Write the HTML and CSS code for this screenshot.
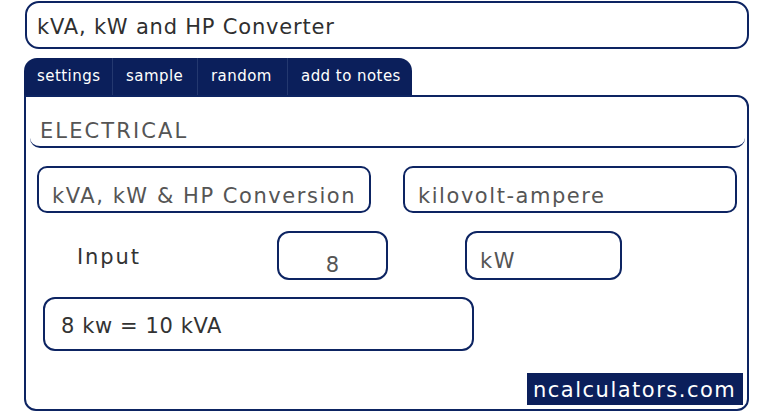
FILE: index.html
```html
<!DOCTYPE html>
<html>
<head>
<meta charset="utf-8">
<link rel="stylesheet" href="styles.css">
</head>
<body>
<div class="title">kVA, kW and HP Converter</div>
<div class="tabs">
  <div class="tab t1">settings</div>
  <div class="tab t2">sample</div>
  <div class="tab t3">random</div>
  <div class="tab t4">add to notes</div>
</div>
<div class="panel">
  <div class="header">ELECTRICAL</div>
  <div class="row row1">
    <div class="box sel">kVA, kW &amp; HP Conversion</div>
    <div class="box sel">kilovolt-ampere</div>
  </div>
  <div class="row row2">
    <div class="label">Input</div>
    <div class="box num">8</div>
    <div class="box unit">kW</div>
  </div>
  <div class="row row3">
    <div class="box result">8 kw = 10 kVA</div>
  </div>
  <div class="footer">
    <div class="brand">ncalculators.com</div>
  </div>
</div>
</body>
</html>
```
FILE: styles.css
```css
* { box-sizing: border-box; }
body {
  margin: 0;
  width: 770px;
  height: 413px;
  background: #fff;
  font-family: "DejaVu Sans", "Noto Sans", sans-serif;
  color: #333;
  overflow: hidden;
}
.title {
  margin: 1px 0 0 25px;
  width: 724px;
  height: 48px;
  border: 2px solid #0d2462;
  border-radius: 14px;
  padding: 12px 0 0 10px;
  font-size: 21px;
  color: #2f2f2f;
  letter-spacing: 0.8px;
  white-space: nowrap;
}
.tabs {
  margin: 9px 0 0 24px;
  width: 388px;
  height: 37px;
  background: #0b1f5b;
  border-radius: 13px 13px 0 0;
  display: flex;
}
.tab {
  color: #fff;
  font-size: 15px;
  letter-spacing: 0.45px;
  padding: 9px 0 0 13px;
  border-right: 1px solid #24386f;
  white-space: nowrap;
}
.t1 { width: 89px; }
.t2 { width: 85px; }
.t3 { width: 90px; }
.t4 { flex: 1; border-right: none; }
.panel {
  margin-left: 24px;
  width: 725px;
  height: 316px;
  border: 2px solid #0d2462;
  border-radius: 0 12px 12px 12px;
}
.header {
  margin: 0 2px 0 4px;
  height: 51px;
  border-bottom: 2px solid #0d2462;
  border-radius: 0 0 10px 10px;
  padding: 22px 0 0 10px;
  font-size: 21px;
  color: #555;
  letter-spacing: 2.1px;
}
.row { display: flex; }
.box {
  border: 2px solid #0d2462;
  border-radius: 10px;
  font-size: 21px;
  color: #555;
  white-space: nowrap;
}
.row1 { margin-top: 18px; padding-left: 11px; gap: 32px; }
.sel { width: 334px; height: 47px; padding: 16px 0 0 13px; letter-spacing: 1.55px; }
.row2 { margin-top: 18px; align-items: flex-start; }
.label { width: 251px; padding: 14px 0 0 51px; font-size: 21px; color: #333; letter-spacing: 1.9px; }
.num { width: 111px; height: 49px; text-align: center; padding-top: 20px; border-radius: 12px; }
.unit { margin-left: 77px; width: 157px; height: 49px; padding: 16px 0 0 13px; border-radius: 12px; letter-spacing: 1.5px; }
.row3 { margin-top: 17px; padding-left: 17px; }
.result { width: 431px; height: 54px; border-radius: 12px; padding: 15px 0 0 16px; color: #333; letter-spacing: 0.6px; }
.footer { margin-top: 22px; display: flex; justify-content: flex-end; padding-right: 4px; }
.brand {
  background: #0b1f5b;
  color: #fff;
  width: 216px;
  height: 32px;
  font-size: 21px;
  letter-spacing: 1.5px;
  padding: 5px 0 0 6px;
  white-space: nowrap;
}
```
